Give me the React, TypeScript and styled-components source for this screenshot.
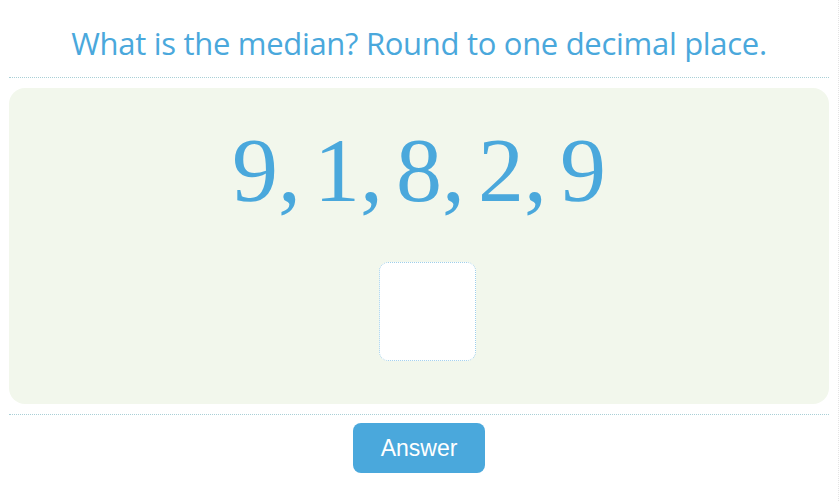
import styled, { createGlobalStyle } from "styled-components";

const GlobalStyle = createGlobalStyle`
  html, body {
    margin: 0;
    padding: 0;
    background: #ffffff;
  }
`;

const Page = styled.div`
  width: 820px;
  height: 501px;
  padding: 0 9px 0 9px;
  border-right: 1px dotted #e4e4e4;
  box-sizing: content-box;
  display: flex;
  flex-direction: column;
`;

const Question = styled.h1`
  margin: 0;
  height: 78px;
  display: flex;
  align-items: center;
  justify-content: center;
  font-family: "Open Sans", "Noto Sans", sans-serif;
  font-weight: 400;
  font-size: 31px;
  letter-spacing: -0.3px;
  color: #4aa8dc;
  border-bottom: 1px dotted #a9cfd6;
  padding-top: 8px;
  box-sizing: border-box;
`;

const Panel = styled.div`
  margin-top: 10px;
  height: 316px;
  background: #f2f7ec;
  border-radius: 16px;
  display: flex;
  flex-direction: column;
  align-items: center;
`;

const Numbers = styled.div`
  margin-top: 32px;
  font-family: "Liberation Serif", "Times New Roman", serif;
  font-size: 92px;
  line-height: 100px;
  word-spacing: -10px;
  color: #4aa8dc;
`;

const AnswerBox = styled.div`
  margin-top: 42px;
  margin-left: 17px;
  width: 95px;
  height: 97px;
  background: #ffffff;
  border: 1px dotted #9fcfeb;
  border-radius: 9px;
`;

const Footer = styled.div`
  margin-top: 10px;
  border-top: 1px dotted #a9cfd6;
  display: flex;
  justify-content: center;
  padding-top: 8px;
`;

const AnswerButton = styled.button`
  width: 132px;
  height: 50px;
  border: none;
  border-radius: 8px;
  background: #4aa8dc;
  color: #ffffff;
  font-family: "Liberation Sans", Arial, sans-serif;
  font-size: 23px;
  cursor: pointer;
`;

export default function App() {
  return (
    <>
      <GlobalStyle />
      <Page>
        <Question>What is the median? Round to one decimal place.</Question>
        <Panel>
          <Numbers>9, 1, 8, 2, 9</Numbers>
          <AnswerBox />
        </Panel>
        <Footer>
          <AnswerButton>Answer</AnswerButton>
        </Footer>
      </Page>
    </>
  );
}
